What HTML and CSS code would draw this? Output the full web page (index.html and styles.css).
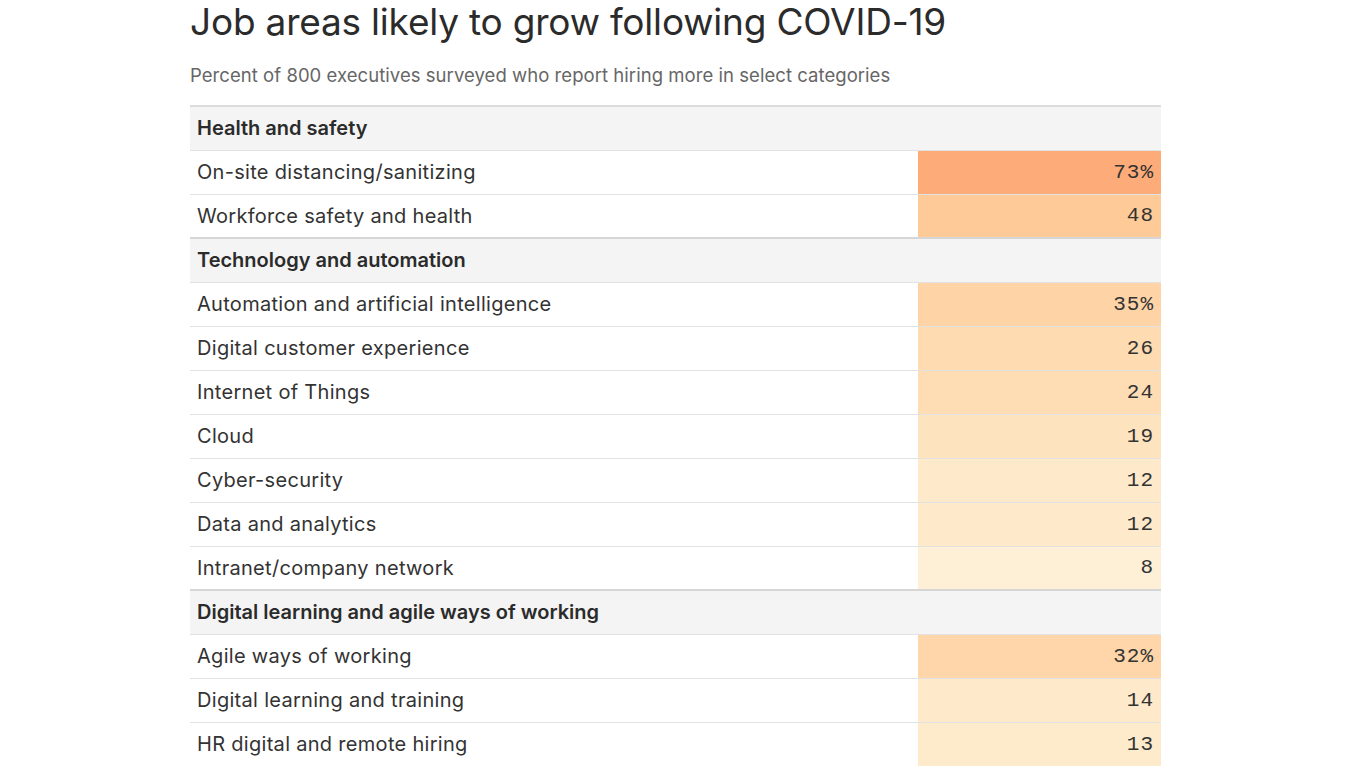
FILE: index.html
```html
<!DOCTYPE html>
<html>
<head>
<meta charset="utf-8">
<link rel="stylesheet" href="styles.css">
</head>
<body>
<div class="chart">
  <h1 class="title">Job areas likely to grow following COVID-19</h1>
  <p class="subtitle">Percent of 800 executives surveyed who report hiring more in select categories</p>
  <table class="data">
    <tbody>
      <tr class="cat first"><td colspan="2">Health and safety</td></tr>
      <tr><td class="label">On-site distancing/sanitizing</td><td class="val" style="background:#fdab78">73%</td></tr>
      <tr><td class="label">Workforce safety and health</td><td class="val" style="background:#fecb98">48</td></tr>
      <tr class="cat"><td colspan="2">Technology and automation</td></tr>
      <tr><td class="label">Automation and artificial intelligence</td><td class="val" style="background:#fed3a6">35%</td></tr>
      <tr><td class="label">Digital customer experience</td><td class="val" style="background:#fedbb1">26</td></tr>
      <tr><td class="label">Internet of Things</td><td class="val" style="background:#fedcb4">24</td></tr>
      <tr><td class="label">Cloud</td><td class="val" style="background:#fee3bf">19</td></tr>
      <tr><td class="label">Cyber-security</td><td class="val" style="background:#feeacb">12</td></tr>
      <tr><td class="label">Data and analytics</td><td class="val" style="background:#feeacb">12</td></tr>
      <tr><td class="label">Intranet/company network</td><td class="val" style="background:#fef0d7">8</td></tr>
      <tr class="cat"><td colspan="2">Digital learning and agile ways of working</td></tr>
      <tr><td class="label">Agile ways of working</td><td class="val" style="background:#fed6a9">32%</td></tr>
      <tr><td class="label">Digital learning and training</td><td class="val" style="background:#feeaca">14</td></tr>
      <tr><td class="label">HR digital and remote hiring</td><td class="val" style="background:#feebcc">13</td></tr>
    </tbody>
  </table>
</div>
</body>
</html>
```

FILE: styles.css
```css
html, body {
  margin: 0;
  padding: 0;
  background: #ffffff;
}
body {
  font-family: Inter, "Open Sans", "Liberation Sans", sans-serif;
  color: #333333;
}
.chart {
  width: 971px;
  margin: 0 0 0 190px;
}
.title {
  margin: 0;
  padding-top: 1px;
  font-size: 37px;
  font-weight: 400;
  line-height: 42px;
  letter-spacing: -0.2px;
  color: #2b2b2b;
}
.subtitle {
  margin: 21px 0 0 0;
  font-size: 18.5px;
  line-height: 22px;
  letter-spacing: 0.05px;
  color: #666666;
}
.data {
  margin-top: 19px;
  width: 100%;
  border-collapse: collapse;
  font-size: 20px;
}
.data td {
  box-sizing: border-box;
  height: 44px;
  padding: 0 7px;
  border-top: 1px solid #e2e2e2;
  vertical-align: middle;
}
.label {
  color: #333333;
  letter-spacing: 0.3px;
}
.val {
  width: 243px;
  text-align: right;
  font-family: "Liberation Mono", "DejaVu Sans Mono", monospace;
  font-size: 21px;
  letter-spacing: 1px;
  color: #333333;
}
.cat td {
  background: #f4f4f4;
  font-weight: 600;
  border-top: 2px solid #d6d6d6;
  color: #2b2b2b;
}
.cat.first td {
  border-top: 2px solid #dcdcdc;
}
```
